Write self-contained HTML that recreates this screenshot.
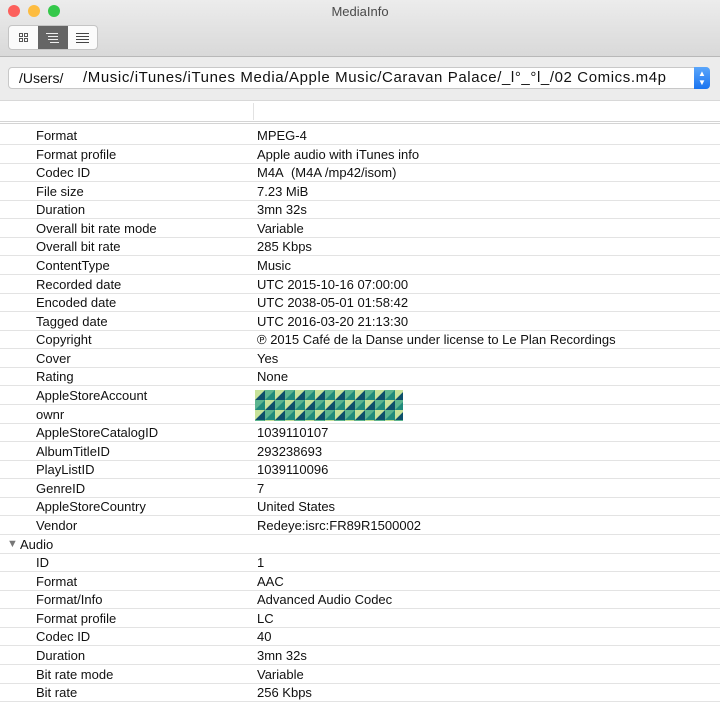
<!DOCTYPE html><html><head><style>
body{margin:0;width:720px;height:701px;overflow:hidden;background:#fff;font-family:"Liberation Sans",sans-serif;font-size:13px;color:#111}
#tb{position:absolute;left:0;top:0;width:720px;height:56px;background:linear-gradient(#ececec,#d9d9d9);border-bottom:1px solid #b8b8b8}
.dot{position:absolute;top:5px;width:12px;height:12px;border-radius:50%}
#title{position:absolute;top:4px;width:720px;text-align:center;font-size:13px;color:#4a4a4a}
#seg{position:absolute;left:8px;top:25px;width:88px;height:23px;background:#fbfbfb;border:1px solid #c4c4c4;border-radius:4px;overflow:hidden}
#seg div{position:absolute;top:0;height:23px;width:29px}
#pathbar{position:absolute;left:0;top:57px;width:720px;height:43px;background:#ececec;border-bottom:1px solid #d8d8d8}
#pop{position:absolute;left:8px;top:10px;width:700px;height:20px;background:#fff;border:1px solid #c8c8c8;border-radius:4px;font-size:15px;line-height:20px}
#pop span{position:absolute;white-space:nowrap}
#arr{position:absolute;right:-1px;top:-1px;width:16px;height:22px;background:linear-gradient(#5aa6fb,#1a74f0);border-radius:0 4px 4px 0;color:#fff;font-size:8px;line-height:9px;text-align:center;padding-top:2px;box-sizing:border-box}
#hdr{position:absolute;left:0;top:101px;width:720px;height:20px;border-bottom:3px double #d4d4d4}
#hdr i{position:absolute;left:253px;top:2px;height:17px;border-left:1px solid #e2e2e2}
.r{position:absolute;left:0;width:720px;height:18px;border-bottom:1px solid #e3e3e3;line-height:19px}
.r b{font-weight:normal;position:absolute;left:36px}
.r u{text-decoration:none;position:absolute;left:257px}
</style></head><body>
<div id="tb">
<div class="dot" style="left:8px;background:#fc605c"></div>
<div class="dot" style="left:28px;background:#fdbc40"></div>
<div class="dot" style="left:48px;background:#34c84a"></div>
<div id="title">MediaInfo</div>
<div id="seg">
<div style="left:0"><svg width="29" height="23"><g fill="none" stroke="#555" stroke-width="1"><rect x="10.5" y="7.5" width="3" height="3"/><rect x="15.5" y="7.5" width="3" height="3"/><rect x="10.5" y="12.5" width="3" height="3"/><rect x="15.5" y="12.5" width="3" height="3"/></g></svg></div>
<div style="left:29px;width:30px;background:#656565"><svg width="30" height="23"><g stroke="#eee" stroke-width="1"><path d="M8 7.5h12M10 10.5h10M10 13.5h10M12 16.5h9"/></g></svg></div>
<div style="left:59px"><svg width="29" height="23"><g stroke="#444" stroke-width="1"><path d="M8 7.5h13M8 10.5h13M8 13.5h13M8 16.5h13"/></g></svg></div>
</div></div>
<div id="pathbar"><div id="pop"><span style="left:10px;font-size:14px">/Users/</span><span style="left:74px;letter-spacing:0.6px">/Music/iTunes/iTunes Media/Apple Music/Caravan Palace/_l°_°l_/02 Comics.m4p</span><div id="arr">▲<br>▼</div></div></div>
<div id="hdr"><i></i></div>
<div class="r" style="top:126px"><b>Format</b><u>MPEG-4</u></div>
<div class="r" style="top:144.6px"><b>Format profile</b><u>Apple audio with iTunes info</u></div>
<div class="r" style="top:163.1px"><b>Codec ID</b><u>M4A&nbsp; (M4A /mp42/isom)</u></div>
<div class="r" style="top:181.7px"><b>File size</b><u>7.23 MiB</u></div>
<div class="r" style="top:200.3px"><b>Duration</b><u>3mn 32s</u></div>
<div class="r" style="top:218.9px"><b>Overall bit rate mode</b><u>Variable</u></div>
<div class="r" style="top:237.4px"><b>Overall bit rate</b><u>285 Kbps</u></div>
<div class="r" style="top:256px"><b>ContentType</b><u>Music</u></div>
<div class="r" style="top:274.6px"><b>Recorded date</b><u>UTC 2015-10-16 07:00:00</u></div>
<div class="r" style="top:293.1px"><b>Encoded date</b><u>UTC 2038-05-01 01:58:42</u></div>
<div class="r" style="top:311.7px"><b>Tagged date</b><u>UTC 2016-03-20 21:13:30</u></div>
<div class="r" style="top:330.3px"><b>Copyright</b><u>℗ 2015 Café de la Danse under license to Le Plan Recordings</u></div>
<div class="r" style="top:348.8px"><b>Cover</b><u>Yes</u></div>
<div class="r" style="top:367.4px"><b>Rating</b><u>None</u></div>
<div class="r" style="top:386px"><b>AppleStoreAccount</b></div>
<div class="r" style="top:404.5px"><b>ownr</b></div>
<div class="r" style="top:423.1px"><b>AppleStoreCatalogID</b><u>1039110107</u></div>
<div class="r" style="top:441.7px"><b>AlbumTitleID</b><u>293238693</u></div>
<div class="r" style="top:460.3px"><b>PlayListID</b><u>1039110096</u></div>
<div class="r" style="top:478.8px"><b>GenreID</b><u>7</u></div>
<div class="r" style="top:497.4px"><b>AppleStoreCountry</b><u>United States</u></div>
<div class="r" style="top:516px"><b>Vendor</b><u>Redeye:isrc:FR89R1500002</u></div>
<div class="r" style="top:534.5px"><b style="left:7px;font-size:11px;color:#777">▼</b><b style="left:20px">Audio</b></div>
<div class="r" style="top:553.1px"><b>ID</b><u>1</u></div>
<div class="r" style="top:571.7px"><b>Format</b><u>AAC</u></div>
<div class="r" style="top:590.2px"><b>Format/Info</b><u>Advanced Audio Codec</u></div>
<div class="r" style="top:608.8px"><b>Format profile</b><u>LC</u></div>
<div class="r" style="top:627.4px"><b>Codec ID</b><u>40</u></div>
<div class="r" style="top:645.9px"><b>Duration</b><u>3mn 32s</u></div>
<div class="r" style="top:664.5px"><b>Bit rate mode</b><u>Variable</u></div>
<div class="r" style="top:683.1px"><b>Bit rate</b><u>256 Kbps</u></div>
<svg style="position:absolute;left:255px;top:390px" width="148" height="31">
<defs><pattern id="p" width="20" height="20" patternUnits="userSpaceOnUse">
<rect width="20" height="20" fill="#5cb58f"/>
<path d="M0 10L10 0V10Z M10 20L20 10V20Z" fill="#0d4f6b"/>
<path d="M10 10L20 0V10Z M0 20L10 10V20Z" fill="#1f8a7c"/>
<path d="M0 0H10L0 10Z M10 10H20L10 20Z" fill="#c7e29a"/>
</pattern></defs>
<rect width="148" height="31" fill="url(#p)"/></svg>
</body></html>
